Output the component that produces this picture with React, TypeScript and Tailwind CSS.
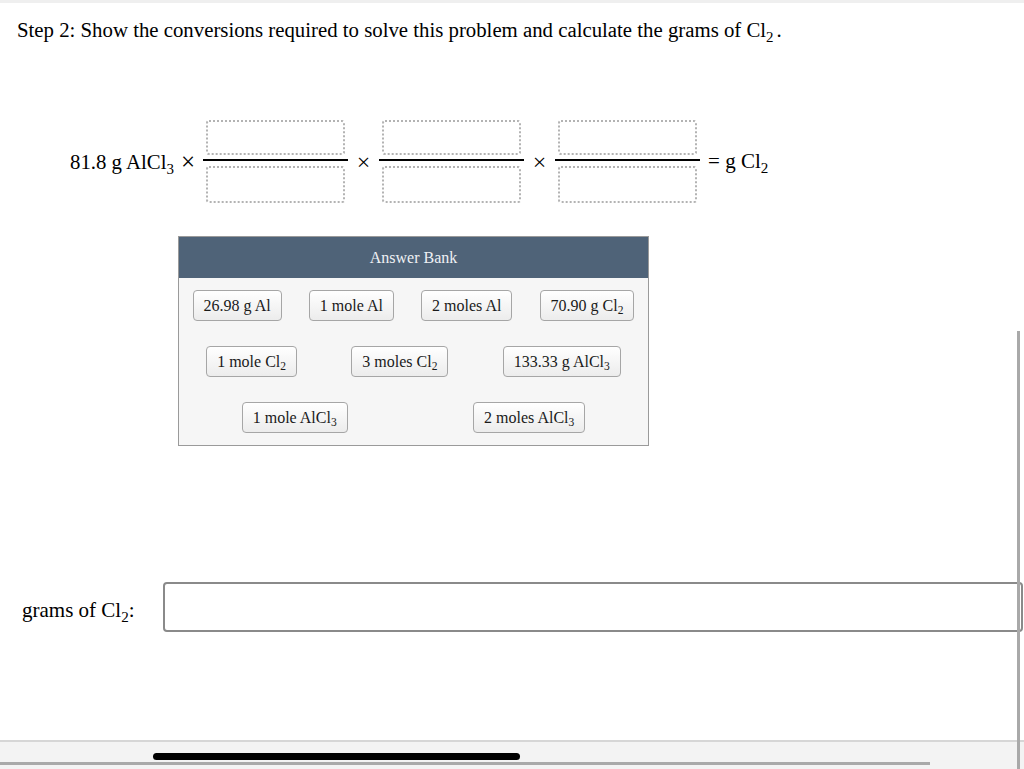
import type { ReactNode } from "react";

const serif = "font-['Liberation_Serif','Times_New_Roman',serif]";

function Sub({ children }: { children: ReactNode }) {
  return <sub className="relative top-[0.32em] align-baseline text-[0.72em]">{children}</sub>;
}

function DropBox({ tall }: { tall?: boolean }) {
  return (
    <div
      className={`${tall ? "h-[37px]" : "h-[35px]"} w-[139px] rounded-[3px] border-2 border-dotted border-[#b3b3b3]`}
    />
  );
}

function Fraction() {
  return (
    <div className="flex w-[145px] flex-col items-center">
      <DropBox />
      <div className="mb-[5px] mt-[4px] h-[2px] w-[145px] bg-black" />
      <DropBox tall />
    </div>
  );
}

function Times() {
  return <span className="flex w-[31px] justify-center text-[24px] leading-none">×</span>;
}

function Tile({ children }: { children: ReactNode }) {
  return (
    <div className="flex h-[31px] items-center rounded-[4px] border border-[#a6a6a6] bg-gradient-to-b from-white to-[#ececec] px-[10px] text-[16px] leading-none text-[#1a1a1a]">
      <span>{children}</span>
    </div>
  );
}

export default function App() {
  return (
    <div className={`relative h-[769px] w-[1024px] overflow-hidden bg-white text-black ${serif}`}>
      <div className="h-[3px] bg-[#efefef]" />

      <h1 className="ml-[17px] mt-[14px] text-[20.8px] leading-[25px]">
        Step 2: Show the conversions required to solve this problem and calculate the grams of Cl<Sub>2</Sub>
        <span className="ml-[3px]">.</span>
      </h1>

      {/* equation */}
      <div className="mt-[78px] flex items-center">
        <span className="ml-[70px] text-[20.8px]">
          81.8 g AlCl<Sub>3</Sub>
        </span>
        <span className="ml-[7px] text-[25px] leading-none">×</span>
        <div className="ml-[8px]">
          <Fraction />
        </div>
        <Times />
        <Fraction />
        <Times />
        <Fraction />
        <span className="ml-[8px] text-[21px]">
          = g Cl<Sub>2</Sub>
        </span>
      </div>

      {/* answer bank */}
      <div className="ml-[178px] mt-[33px] w-[471px] border border-[#9a9a9a] bg-[#f6f6f6]">
        <div className="flex h-[41px] items-center justify-center bg-[#4f6378] text-[16px] text-[#eef1f4]">
          Answer Bank
        </div>
        <div className="flex flex-col gap-[25px] pb-[12px] pt-[12px]">
          <div className="flex justify-around">
            <Tile>26.98 g Al</Tile>
            <Tile>1 mole Al</Tile>
            <Tile>2 moles Al</Tile>
            <Tile>
              70.90 g Cl<Sub>2</Sub>
            </Tile>
          </div>
          <div className="flex justify-around">
            <Tile>
              1 mole Cl<Sub>2</Sub>
            </Tile>
            <Tile>
              3 moles Cl<Sub>2</Sub>
            </Tile>
            <Tile>
              133.33 g AlCl<Sub>3</Sub>
            </Tile>
          </div>
          <div className="flex justify-around">
            <Tile>
              1 mole AlCl<Sub>3</Sub>
            </Tile>
            <Tile>
              2 moles AlCl<Sub>3</Sub>
            </Tile>
          </div>
        </div>
      </div>

      {/* answer input */}
      <div className="mt-[136px] flex items-center">
        <span className="ml-[22px] w-[141px] pt-[8px] text-[21px]">
          grams of Cl<Sub>2</Sub>:
        </span>
        <div className="h-[50px] w-[860px] rounded-[4px] border-2 border-[#8a8a8a] bg-white" />
      </div>

      {/* scrollbars */}
      <div className="absolute bottom-0 left-0 right-0 h-[29px] border-t-2 border-[#d6d6d6] bg-[#f3f3f3]" />
      <div className="absolute bottom-[9px] left-[153px] h-[7px] w-[367px] rounded-full bg-black" />
      <div className="absolute bottom-[4px] left-0 h-[3px] w-[930px] bg-[#a9a9a9]" />
      <div className="absolute bottom-0 left-[1017px] top-[331px] w-[3px] bg-[#a9a9a9]" />
    </div>
  );
}
